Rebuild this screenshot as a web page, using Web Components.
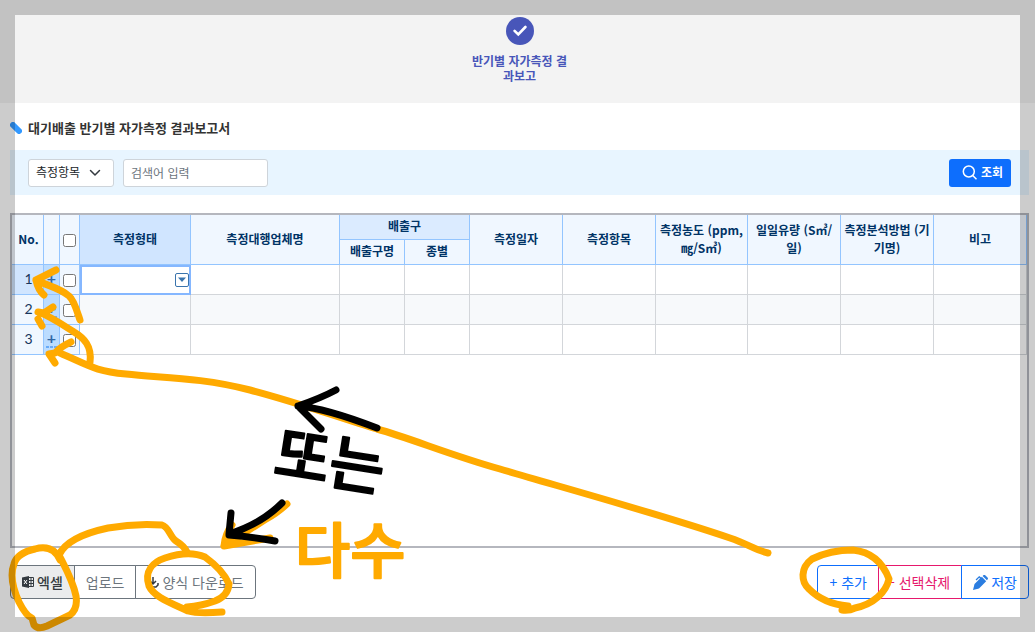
<!DOCTYPE html>
<html lang="ko">
<head>
<meta charset="utf-8">
<meta name="viewport" content="width=device-width, initial-scale=1">
<title>반기별 자가측정 결과보고</title>
<style>
  body {
    margin: 0;
    min-height: 100vh;
    position: relative;
    background: #fff;
    color: #212529;
    font: 12px/18px "Noto Sans CJK KR", sans-serif;
  }
  main {
    padding: 0 6px 33px 10px;
  }
</style>
</head>
<body>

<step-header>반기별 자가측정 결과보고</step-header>
<main>
  <section-title>대기배출 반기별 자가측정 결과보고서</section-title>
  <search-bar></search-bar>
  <report-grid></report-grid>
  <grid-toolbar>
    <tool-button slot="start" tone="gray" active>
      <svg slot="icon" width="12" height="12" viewBox="0 0 12 12"><path fill="#343a40" d="M0 1.4 7 0v12L0 10.6z"/><path fill="none" stroke="#343a40" d="M7 1.5h4.5v9H7M9 1.5v9M7 4.5h4.5M7 7.5h4.5"/><path stroke="#fff" d="m2 4 3 4M5 4 2 8"/></svg>
      엑셀
    </tool-button>
    <tool-button slot="start" tone="gray">업로드</tool-button>
    <tool-button slot="start" tone="gray">
      <svg slot="icon" width="12" height="12" viewBox="0 0 12 12"><path fill="none" stroke="#343a40" stroke-width="1.500" d="M1 7v2.500L3 11h6l2-2V7M6 1v7M3.500 5.500 6 8l3-3"/></svg>
      양식 다운로드
    </tool-button>
    <tool-button slot="end" tone="blue">+ 추가</tool-button>
    <tool-button slot="end" tone="pink">- 선택삭제</tool-button>
    <tool-button slot="end" tone="blue">
      <svg slot="icon" width="15" height="15" viewBox="0 0 15 15"><path fill="#2b7de0" d="M0 15 1.500 9 7 3.500 6.200 2.700 3.500 5.400 2.600 4.500 6.200 1 8.200 2.400 8.800 1.800 13.200 6.200 6 13.500zM9.600 1 10.600 0Q11.500-.5 12.500.5L14.500 2.500Q15.500 3.500 14.500 4.500L13.900 5.200z"/></svg>
      저장
    </tool-button>
  </grid-toolbar>
</main>
<ink-notes></ink-notes>
<dim-frame></dim-frame>

<script>
function attach(el, html) {
  const root = el.attachShadow({ mode: 'open' });
  root.innerHTML = html;
  return root;
}

// Current step: round check and its name
class StepHeader extends HTMLElement {
  constructor() {
    super();
    attach(this, `
      <style>
        :host {
          display: flex;
          flex-direction: column;
          align-items: center;
          gap: 8px;
          padding: 17px 6px 20px 10px;
          background: #f3f3f3;
          color: #4856b9;
        }
        .dot {
          display: grid;
          place-items: center;
          width: 28px;
          height: 28px;
          border-radius: 50%;
          background: #4856b9;
        }
        .name {
          width: 100px;
          font-weight: 700;
          line-height: 15px;
          text-align: center;
        }
      </style>
      <div class="dot">
        <svg width="14" height="12" viewBox="0 0 14 12"><path fill="none" stroke="#fff" stroke-width="2.600" stroke-linecap="round" d="m1.600 5.800 3.700 3.700L12.400 2"/></svg>
      </div>
      <div class="name"><slot></slot></div>
    `);
  }
}
customElements.define('step-header', StepHeader);

class SectionTitle extends HTMLElement {
  constructor() {
    super();
    attach(this, `
      <style>
        :host { display: block; padding: 15px 0 12px; }
        h2 {
          display: flex;
          align-items: center;
          gap: 6px;
          margin: 0;
          color: #333;
          font-size: 13px;
          line-height: 20px;
        }
      </style>
      <h2>
        <svg width="12" height="12" viewBox="0 0 12 12"><path stroke="#3399ff" stroke-width="6" stroke-linecap="round" d="m3 3 6 6"/></svg>
        <slot></slot>
      </h2>
    `);
  }
}
customElements.define('section-title', SectionTitle);

class SearchBar extends HTMLElement {
  constructor() {
    super();
    attach(this, `
      <style>
        :host {
          display: flex;
          align-items: center;
          gap: 9px;
          padding: 9px 18px 8px;
          background: #e8f5ff;
        }
        select, input, button {
          box-sizing: border-box;
          height: 28px;
          margin: 0;
          font: inherit;
          border-radius: 3px;
        }
        select, input {
          border: 1px solid #ced4da;
          background: #fff;
          color: #212529;
          padding: 0 7px 2px;
        }
        .pick {
          display: grid;
          align-items: center;
          width: 86px;
        }
        .pick > * { grid-area: 1 / 1; }
        .pick svg {
          justify-self: end;
          margin-right: 13px;
          pointer-events: none;
        }
        select { width: 100%; appearance: none; }
        input { width: 145px; }
        input::placeholder { color: #6c757d; opacity: 1; }
        button {
          display: flex;
          align-items: center;
          gap: 4px;
          margin-left: auto;
          padding: 0 8px 2px 13px;
          border: 0;
          background: #0d6efd;
          color: #fff;
          font-weight: 700;
        }
      </style>
      <div class="pick">
        <select aria-label="검색 구분"><option>측정항목</option></select>
        <svg width="12" height="8" viewBox="0 0 12 8"><path fill="none" stroke="#343a40" stroke-width="1.500" stroke-linecap="round" stroke-linejoin="round" d="m1.500 1.500 4.500 4.500 4.500-4.500"/></svg>
      </div>
      <input type="text" aria-label="검색어" placeholder="검색어 입력">
      <button type="button">
        <svg width="15" height="15" viewBox="0 0 15 15"><g fill="none" stroke="#fff" stroke-width="1.500"><circle cx="6.800" cy="6.500" r="5.500"/><path d="m10.700 10.500 3.800 3.800"/></g></svg>
        조회
      </button>
    `);
  }
}
customElements.define('search-bar', SearchBar);

class ReportGrid extends HTMLElement {
  constructor() {
    super();
    const widths = [32, 16, 20, 111, 149, 65, 65, 93, 93, 92, 93, 93, 93];
    const cols = widths.map(w => `<col style="width:${w}px">`).join('');
    const rows = [1, 2, 3].map(n => this.row(n)).join('');
    attach(this, `
      <style>
        :host {
          display: block;
          box-sizing: border-box;
          min-height: 335px;
          margin-top: 18px;
          border: 2px solid #b5b7be;
          background: #fff;
        }
        table {
          width: 100%;
          table-layout: fixed;
          border-collapse: separate;
          border-spacing: 0;
        }
        th, td {
          box-sizing: border-box;
          padding: 0;
          border: solid #93c5ff;
          border-width: 0 1px 1px 0;
          text-align: center;
        }
        th {
          height: 25px;
          padding: 0 2px 2px;
          background: #f0f7ff;
          color: #003366;
          font-weight: 700;
          line-height: 18px;
        }
        th.tight { padding: 0; }
        th.num { padding: 0 0 2px 2px; }
        th.group { background: #dbebff; }
        th.on { background: #d0e5ff; }
        td { height: 30px; border-color: #d3d6da; }
        tr:nth-child(even) td { background: #f7f9fb; }
        td.no, td.pick, tr:nth-child(even) td.no, tr:nth-child(even) td.pick {
          background: #f0f7ff;
          border-color: #93c5ff;
        }
        td.no { padding: 0 0 2px 2px; color: #17365d; font: 14px/20px Lato, sans-serif; }
        tbody tr:first-child td.no { background: #d0e5ff; }
        td.add, tr:nth-child(even) td.add { background: #bbdcff; border-color: #93c5ff; }
        .add button {
          display: block;
          width: 11px;
          height: 16px;
          margin: 0 auto;
          padding: 0 0 4px;
          border: 0;
          background: repeating-linear-gradient(90deg, #6aabf7 0 3px, transparent 3px 4px) bottom / 100% 2px no-repeat;
          color: #2f67a5;
          font: 700 16px/12px Lato, sans-serif;
        }
        input { display: block; width: 13px; height: 13px; margin: 2px auto 0; }
        td.edit { border: 2px solid #85b7ff; }
        .open {
          display: grid;
          place-items: center;
          width: 14px;
          height: 14px;
          margin-left: auto;
          padding: 0;
          border: 1px solid #3a74ad;
          border-radius: 2px;
          background: #fff;
        }
      </style>
      <table>
        <colgroup>${cols}</colgroup>
        <thead>
          <tr>
            <th rowspan="2" class="num">No.</th>
            <th rowspan="2" class="tight"></th>
            <th rowspan="2" class="tight"><input type="checkbox" aria-label="전체 선택"></th>
            <th rowspan="2" class="on">측정형태</th>
            <th rowspan="2">측정대행업체명</th>
            <th colspan="2" class="group">배출구</th>
            <th rowspan="2">측정일자</th>
            <th rowspan="2">측정항목</th>
            <th rowspan="2">측정농도 (ppm, ㎎/S㎥)</th>
            <th rowspan="2">일일유량 (S㎥/일)</th>
            <th rowspan="2">측정분석방법 (기기명)</th>
            <th rowspan="2">비고</th>
          </tr>
          <tr><th>배출구명</th><th>종별</th></tr>
        </thead>
        <tbody>${rows}</tbody>
      </table>
    `);
  }

  row(n) {
    // the first row has its first cell in edit mode
    const first = n === 1
      ? `<td class="edit"><button type="button" class="open" aria-label="목록 열기"><svg width="10" height="6" viewBox="0 0 10 6"><path fill="#3a74ad" d="M1 .5h8L5 5z"/></svg></button></td>`
      : '<td></td>';
    return `<tr>
      <td class="no">${n}</td>
      <td class="add"><button type="button" aria-label="행 추가">+</button></td>
      <td class="pick"><input type="checkbox" aria-label="${n}행 선택"></td>
      ${first}${'<td></td>'.repeat(9)}
    </tr>`;
  }
}
customElements.define('report-grid', ReportGrid);

class GridToolbar extends HTMLElement {
  constructor() {
    super();
    attach(this, `
      <style>
        :host { display: flex; justify-content: space-between; padding-top: 17px; }
        .group { display: flex; }
      </style>
      <div class="group"><slot name="start"></slot></div>
      <div class="group"><slot name="end"></slot></div>
    `);
  }
}
customElements.define('grid-toolbar', GridToolbar);

class ToolButton extends HTMLElement {
  constructor() {
    super();
    attach(this, `
      <style>
        :host { display: block; margin-left: -1px; --tone: #6c757d; }
        :host([tone="blue"]) { --tone: #0d6efd; }
        :host([tone="pink"]) { --tone: #e6186d; }
        button {
          display: flex;
          align-items: center;
          gap: 3px;
          height: 34px;
          padding: 0 11px;
          border: 1px solid var(--tone);
          background: #fff;
          color: var(--tone);
          font: inherit;
          font-size: 14px;
          white-space: nowrap;
        }
        :host([active]) button { background: #ebeced; color: #343a40; font-weight: 500; }
        button.first { border-radius: 4px 0 0 4px; }
        button.last { border-radius: 0 4px 4px 0; }
      </style>
      <button type="button"><slot name="icon"></slot><span><slot></slot></span></button>
    `);
  }

  connectedCallback() {
    const group = this.parentElement.querySelectorAll(`[slot="${this.slot}"]`);
    const button = this.shadowRoot.querySelector('button');
    button.classList.toggle('first', group[0] === this);
    button.classList.toggle('last', group[group.length - 1] === this);
    if (group[0] === this) this.style.marginLeft = '0';
  }
}
customElements.define('tool-button', ToolButton);

// Pen marks laid over the page
class InkNotes extends HTMLElement {
  constructor() {
    super();
    attach(this, `
      <style>
        :host { position: absolute; inset: 0; pointer-events: none; }
        svg { display: block; width: 100%; height: 100%; }
        path { fill: none; stroke-width: 7; stroke-linecap: round; stroke-linejoin: round; }
        .o { stroke: #ffaa00; }
        .k { stroke: #000; }
        text { stroke-width: 2; stroke-linejoin: round; }
      </style>
      <svg>
        <g class="o">
          <path d="M768 553C755 550 748 544 730 538C660 514 550 484 500 469C450 455 410 438 377 429C340 418 300 403 250 390C200 377 160 378 126 374C95 371 90 366 60 353"/>
          <path d="M71 342Q60 347 55 353L49 354L55 363"/>
          <path d="M90 362C92 346 84 338 74 332C60 323 50 316 38 312L44 313L53 307M38 319L42 326"/>
          <path d="M80 320C77 311 74 300 69 296C60 288 48 286 36 280L56 270M36 280Q38 290 44 295"/>
          <path d="M59 555C64 544 80 534 108 528Q135 523 162 525C169 527 170 537 176 541Q184 546 187 552"/>
          <path d="M60 560C55 548 45 546 35 549Q17 553 14 564C9 577 14 591 19 602Q26 616 32 618L34 625Q38 630 47 626L70 615Q78 609 76 596C73 581 65 567 60 557"/>
          <path d="M222 612Q198 614 188 611C171 603 154 597 149 586C144 571 153 562 165 558Q189 550 205 557Q223 570 229 584Q228 596 215 601Q201 606 187 607"/>
          <path d="M287 504Q276 514 266 519L224 546L270 538M232 525Q225 534 224 546L240 532"/>
          <path d="M842 610Q849 611 855 608C874 604 886 592 889 579C883 563 872 552 853 550Q830 550 812 559C800 568 801 582 809 589Q824 604 848 606"/>
        </g>
        <g class="k">
          <path d="M336 390Q321 398 298 406L321 429M298 406Q325 408 377 428"/>
          <path d="M231 513L229 534Q261 524 282 503M229 535Q252 537 275 541"/>
        </g>
        <text class="k" x="272" y="474" font-size="60" fill="#000" font-weight="500" transform="rotate(9 272 474)">또는</text>
        <text class="o" x="295" y="573" font-size="60" fill="#ffaa00" font-weight="500">다수</text>
      </svg>
    `);
  }
}
customElements.define('ink-notes', InkNotes);

// Translucent frame around the whole window
class DimFrame extends HTMLElement {
  constructor() {
    super();
    attach(this, `
      <style>
        :host {
          position: fixed;
          inset: 0;
          border: 15px solid rgba(0, 0, 0, .2);
          pointer-events: none;
        }
      </style>
    `);
  }
}
customElements.define('dim-frame', DimFrame);
</script>
</body>
</html>
